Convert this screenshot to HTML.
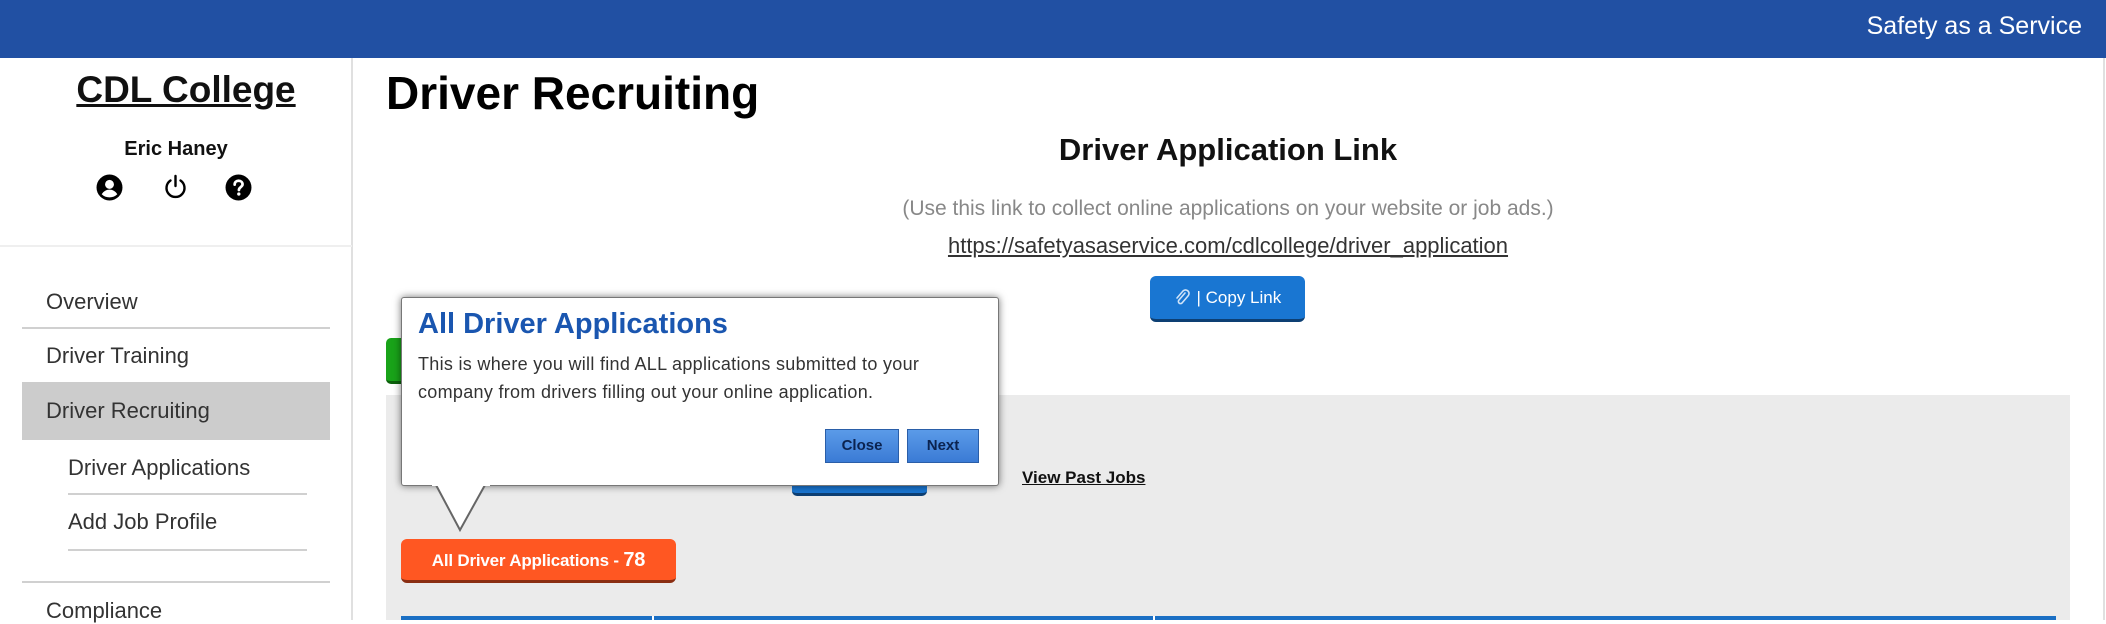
<!DOCTYPE html>
<html><head><meta charset="utf-8"><style>
*{margin:0;padding:0;box-sizing:border-box}
body{width:2106px;height:620px;overflow:hidden;background:#fff;font-family:"Liberation Sans",sans-serif;position:relative;color:#333}
.a{position:absolute}
.top{left:0;top:0;width:2106px;height:58px;background:#2150a3}
.top span{position:absolute;right:24px;top:12px;color:#fff;font-size:25px}
.side{left:0;top:58px;width:353px;height:562px;border-right:2px solid #e0e0e0}
.nav{font-size:22px;color:#333;white-space:nowrap}
.ln{height:2px;background:#d0d0d0}
</style></head><body>
<div class="a top"><span>Safety as a Service</span></div>
<div class="a side"></div>
<div class="a" style="left:2103px;top:58px;width:2px;height:562px;background:#e0e0e0"></div>
<div class="a" style="left:0;top:245px;width:352px;height:2px;background:#efefef"></div>
<div class="a" style="left:0;top:69px;width:372px;text-align:center;font-size:37px;font-weight:bold;text-decoration:underline;color:#111">CDL College</div>
<div class="a" style="left:0;top:138px;width:352px;text-align:center;font-size:20px;font-weight:bold;color:#111">Eric Haney</div>
<svg class="a" style="left:96px;top:174px" width="27" height="27" viewBox="0 0 26 26"><circle cx="13" cy="13" r="12.5" fill="#000"/><circle cx="13" cy="10" r="4.3" fill="#fff"/><path d="M5.5 19.5c2-3.2 4.6-4.5 7.5-4.5s5.5 1.3 7.5 4.5c-2 2-4.5 3-7.5 3s-5.5-1-7.5-3z" fill="#fff"/></svg>
<svg class="a" style="left:162px;top:173px" width="27" height="28" viewBox="0 0 26 28"><path d="M8 7.5A9 9 0 1 0 18 7.5" fill="none" stroke="#000" stroke-width="2.4" stroke-linecap="round"/><line x1="13" y1="3" x2="13" y2="13" stroke="#000" stroke-width="2.4" stroke-linecap="round"/></svg>
<svg class="a" style="left:225px;top:174px" width="27" height="27" viewBox="0 0 26 26"><circle cx="13" cy="13" r="12.5" fill="#000"/><path d="M9.3 10.2c0-2.3 1.7-3.7 3.8-3.7s3.8 1.4 3.8 3.4c0 2.7-3.5 2.6-3.5 5.5" fill="none" stroke="#fff" stroke-width="2.6" stroke-linecap="round"/><circle cx="13.3" cy="19.3" r="1.6" fill="#fff"/></svg>
<div class="a nav" style="left:46px;top:289px">Overview</div>
<div class="a ln" style="left:22px;top:327px;width:308px"></div>
<div class="a nav" style="left:46px;top:343px">Driver Training</div>
<div class="a" style="left:22px;top:382px;width:308px;height:58px;background:#cccccc"></div>
<div class="a nav" style="left:46px;top:398px">Driver Recruiting</div>
<div class="a nav" style="left:68px;top:455px">Driver Applications</div>
<div class="a ln" style="left:68px;top:493px;width:239px"></div>
<div class="a nav" style="left:68px;top:509px">Add Job Profile</div>
<div class="a ln" style="left:68px;top:549px;width:239px"></div>
<div class="a ln" style="left:22px;top:581px;width:308px"></div>
<div class="a nav" style="left:46px;top:598px">Compliance</div>

<div class="a" style="left:386px;top:66px;font-size:46px;font-weight:bold;color:#000">Driver Recruiting</div>
<div class="a" style="left:900px;top:132px;width:656px;text-align:center;font-size:31px;font-weight:bold;color:#111">Driver Application Link</div>
<div class="a" style="left:830px;top:197px;width:796px;text-align:center;font-size:21px;color:#888">(Use this link to collect online applications on your website or job ads.)</div>
<div class="a" style="left:830px;top:233px;width:796px;text-align:center;font-size:22px;color:#333;text-decoration:underline">https://safetyasaservice.com/cdlcollege/driver_application</div>
<div class="a" style="left:1150px;top:276px;width:155px;height:46px;background:#1976d2;border-radius:6px;border-bottom:3px solid #0d3f73;color:#fff;font-size:17px;line-height:43px;text-align:center"><svg width="18" height="18" viewBox="0 0 18 18" style="vertical-align:-4px"><path d="M11 4 5 11a2 2 0 0 0 3 3l6-7a3.5 3.5 0 0 0-5-5L3 9" fill="none" stroke="#cfe3f8" stroke-width="1.6" stroke-linecap="round"/></svg> | Copy Link</div>

<div class="a" style="left:386px;top:338px;width:40px;height:46px;background:#19a319;border-radius:5px;border-bottom:3px solid #0c600c"></div>
<div class="a" style="left:386px;top:395px;width:1684px;height:225px;background:#ebebeb"></div>
<div class="a" style="left:792px;top:460px;width:135px;height:36px;background:#1976d2;border-radius:5px;border-bottom:3px solid #0d3f73"></div>
<div class="a" style="left:1022px;top:468px;font-size:17px;font-weight:bold;color:#111;text-decoration:underline">View Past Jobs</div>
<div class="a" style="left:401px;top:539px;width:275px;height:44px;background:#ff5722;border-radius:6px;border-bottom:3px solid #8a2e12;color:#fff;font-weight:bold;font-size:17px;line-height:42px;text-align:center;letter-spacing:-0.2px">All Driver Applications - <span style="font-size:20px">78</span></div>
<div class="a" style="left:401px;top:616px;width:1655px;height:4px;background:#1a6fc4"></div>
<div class="a" style="left:652px;top:616px;width:2px;height:4px;background:#fff"></div>
<div class="a" style="left:1153px;top:616px;width:2px;height:4px;background:#fff"></div>

<div class="a" style="left:401px;top:297px;width:598px;height:189px;background:#fff;border:1px solid #777;border-radius:3px;box-shadow:0 0 8px rgba(0,0,0,.55)"></div>
<svg class="a" style="left:432px;top:484px" width="58" height="50" viewBox="0 0 58 50"><path d="M4 1 28 46 53 1" fill="#fff" stroke="#666" stroke-width="2"/><rect x="0" y="0" width="58" height="2" fill="#fff"/></svg>
<div class="a" style="left:418px;top:308px;font-size:29px;font-weight:bold;color:#1a56b0">All Driver Applications</div>
<div class="a" style="left:418px;top:350px;font-size:18px;line-height:28px;color:#333;letter-spacing:0.3px">This is where you will find ALL applications submitted to your<br>company from drivers filling out your online application.</div>
<div class="a" style="left:825px;top:429px;width:74px;height:34px;background:linear-gradient(#5b9be8,#3a7bd5);border:1px solid #2a5ea8;color:#0b2350;font-weight:bold;font-size:15px;line-height:32px;text-align:center">Close</div>
<div class="a" style="left:907px;top:429px;width:72px;height:34px;background:linear-gradient(#5b9be8,#3a7bd5);border:1px solid #2a5ea8;color:#0b2350;font-weight:bold;font-size:15px;line-height:32px;text-align:center">Next</div>
</body></html>
